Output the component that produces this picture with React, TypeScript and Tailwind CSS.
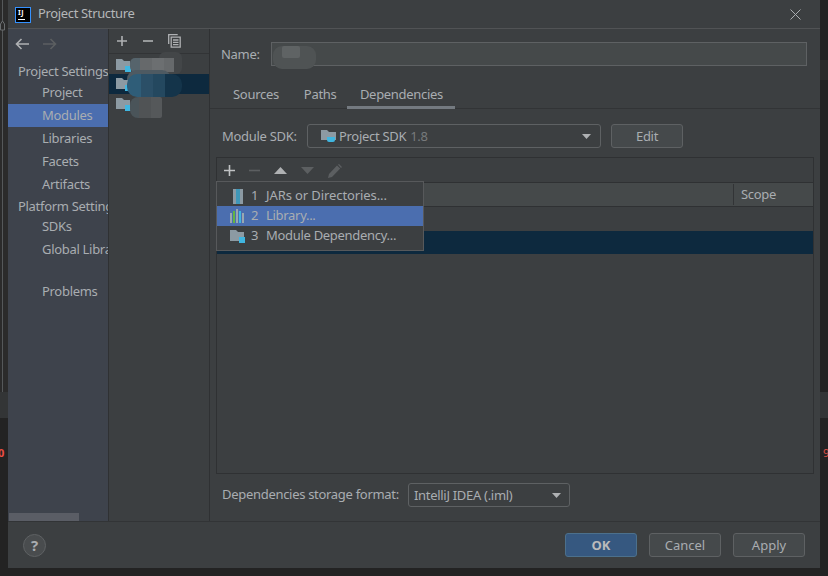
import React from 'react';

const font = { fontFamily: '"Noto Sans", "Liberation Sans", sans-serif' };

const Folder = ({ badge = true }: { badge?: boolean }) => (
  <svg width="16" height="14" viewBox="0 0 16 14">
    <path d="M0 1h6l2 2h6v9H0z" fill="#8c9aa3" />
    {badge && <rect x="9" y="8" width="6" height="6" fill="#40b6e0" />}
  </svg>
);

const Caret = () => (
  <svg width="9" height="5" viewBox="0 0 9 5">
    <path d="M0 0h9L4.5 5z" fill="#afb1b3" />
  </svg>
);

const navItems = [
  { label: 'Project' },
  { label: 'Modules', active: true },
  { label: 'Libraries' },
  { label: 'Facets' },
  { label: 'Artifacts' },
];

function Sidebar() {
  return (
    <div className="relative flex w-[101px] shrink-0 flex-col overflow-hidden whitespace-nowrap border-r border-[#2f3133] bg-[#3e434c] text-[13px] tracking-[-0.3px] text-[#a9adb1]">
      <div className="flex h-[28px] items-center gap-[14px] pl-[7px] pt-[2px]">
        <svg width="14" height="12" viewBox="0 0 14 12" fill="none" stroke="#afb1b3" strokeWidth="1.6">
          <path d="M14 6H1.5M6.5 1 1.5 6l5 5" />
        </svg>
        <svg width="14" height="12" viewBox="0 0 14 12" fill="none" stroke="#5c5f61" strokeWidth="1.6">
          <path d="M0 6h12.5M7.5 1l5 5-5 5" />
        </svg>
      </div>
      <div className="flex h-[24px] items-center pl-[10px] pt-[6px]">Project Settings</div>
      {navItems.map((n) => (
        <div
          key={n.label}
          className={`flex h-[23px] shrink-0 items-center pl-[34px] ${n.active ? 'bg-[#4b6eaf]' : ''}`}
        >
          {n.label}
        </div>
      ))}
      <div className="flex h-[20px] items-center pl-[10px] pt-[1px]">Platform Settings</div>
      <div className="flex h-[22px] items-center pl-[34px]">SDKs</div>
      <div className="flex h-[23px] items-center pl-[34px]">Global Libraries</div>
      <div className="h-[19px]" />
      <div className="flex h-[23px] items-center pl-[34px]">Problems</div>
      <div className="absolute bottom-0 left-[1px] h-[8px] w-[70px] bg-[#5a5d65]" />
    </div>
  );
}

function ModuleList() {
  return (
    <div className="relative flex w-[101px] shrink-0 flex-col border-r border-[#2f3133]">
      <div className="flex h-[25px] items-center gap-[14px] border-b border-[#323436] pl-[7px]">
        <svg width="12" height="12" viewBox="0 0 12 12" stroke="#afb1b3" strokeWidth="1.6">
          <path d="M6 1v10M1 6h10" />
        </svg>
        <svg width="12" height="12" viewBox="0 0 12 12" stroke="#afb1b3" strokeWidth="1.6">
          <path d="M1 6h10" />
        </svg>
        <svg width="13" height="14" viewBox="0 0 13 14" fill="none" stroke="#afb1b3" strokeWidth="1.3">
          <path d="M.7 10V.7h9" />
          <path d="M3.2 3.2h9v10h-9zM5 6h5.5M5 8.3h5.5M5 10.6h5.5" />
        </svg>
      </div>
      <div className="flex h-[20px] items-center pl-[7px] pt-[2px]">
        <Folder />
      </div>
      <div className="flex h-[20px] items-center bg-[#0d293e] pl-[7px]">
        <Folder />
      </div>
      <div className="flex h-[20px] items-center pl-[7px]">
        <Folder />
      </div>
      {/* blurred-out module names */}
      <div className="absolute left-[50px] top-[23px] h-[22px] w-[23px] rounded-[6px] bg-[#434648]" />
      <div className="absolute left-[21px] top-[29px] flex h-[14px] w-[44px] overflow-hidden rounded-l-[5px]">
        <div className="w-[10px] bg-[#56646c]" />
        <div className="w-[12px] bg-[#66696b]" />
        <div className="w-[12px] bg-[#6c6f71]" />
        <div className="w-[10px] bg-[#66696b]" />
      </div>
      <div className="absolute left-[18px] top-[41px] h-[10px] w-[44px] rounded-t-[9px] bg-[#4e5a62]" />
      <div className="absolute left-[18px] top-[45px] flex h-[23px] w-[55px] overflow-hidden rounded-[10px]">
        <div className="w-[14px] bg-[#2f5d78]" />
        <div className="w-[12px] bg-[#2b4f67]" />
        <div className="w-[12px] bg-[#24485f]" />
        <div className="w-[17px] bg-[#14344a]" />
      </div>
      <div className="absolute left-[21px] top-[68px] flex h-[21px] w-[32px] overflow-hidden rounded-l-[8px] rounded-r-[2px]">
        <div className="w-[9px] bg-[#4a5459]" />
        <div className="w-[12px] bg-[#505355]" />
        <div className="w-[11px] bg-[#55585a]" />
      </div>
    </div>
  );
}

function Tabs() {
  return (
    <div className="flex h-[31px] items-start border-b border-[#323436] pl-[10px] text-[13px] text-[#a9adb1]">
      <div className="flex h-[31px] items-center px-[13px] pt-[2px]">Sources</div>
      <div className="flex h-[31px] items-center pl-[12px] pr-[11px] pt-[2px]">Paths</div>
      <div className="flex h-[31px] w-[108px] items-center justify-center border-b-[3px] border-[#747a80] pt-[5px]">
        Dependencies
      </div>
    </div>
  );
}

function DepMenu() {
  return (
    <div className="absolute left-[-1px] top-[23px] z-10 w-[208px] border border-[#57595b] bg-[#3c3f41] py-[4px] text-[13px] text-[#a9adb1]">
      <div className="flex h-[20px] items-center pl-[13px]">
        <svg width="14" height="15" viewBox="0 0 14 15" className="mr-[7px]">
          <rect x="3" width="3" height="15" fill="#8c9aa3" />
          <rect x="6" width="4" height="15" fill="#40b6e0" opacity="0.75" />
          <rect x="10" width="3" height="15" fill="#8c9aa3" />
        </svg>
        <span className="w-[15px]">1</span>
        <span className="tracking-[-0.1px]">JARs or Directories...</span>
      </div>
      <div className="flex h-[20px] items-center bg-[#4b6eaf] pl-[13px]">
        <svg width="14" height="14" viewBox="0 0 14 14" className="mr-[7px]">
          <rect x="0" y="4" width="2" height="10" fill="#9aa7b0" />
          <rect x="3" y="2" width="2" height="12" fill="#62b543" />
          <rect x="6" y="0" width="2" height="14" fill="#9aa7b0" />
          <rect x="9" y="2" width="2" height="12" fill="#40b6e0" />
          <rect x="12" y="4" width="2" height="10" fill="#9aa7b0" />
        </svg>
        <span className="w-[15px]">2</span>Library...
      </div>
      <div className="flex h-[20px] items-center pl-[13px]">
        <span className="mr-[5px] flex">
          <Folder />
        </span>
        <span className="w-[15px]">3</span>Module Dependency...
      </div>
    </div>
  );
}

function DepTable() {
  return (
    <div className="relative ml-[6px] mt-[9px] flex h-[317px] w-[598px] flex-col border border-[#2f3133]">
      <div className="flex h-[24px] items-center gap-[14px] pl-[7px] pt-[1px]">
        <svg width="11" height="11" viewBox="0 0 11 11" stroke="#c0c2c4" strokeWidth="1.6">
          <path d="M5.5 0v11M0 5.5h11" />
        </svg>
        <svg width="11" height="11" viewBox="0 0 11 11" stroke="#5c5f61" strokeWidth="1.6">
          <path d="M0 5.5h11" />
        </svg>
        <svg width="13" height="7" viewBox="0 0 13 7">
          <path d="M0 7h13L6.5 0z" fill="#afb1b3" />
        </svg>
        <svg width="13" height="7" viewBox="0 0 13 7">
          <path d="M0 0h13L6.5 7z" fill="#5c5f61" />
        </svg>
        <svg width="14" height="14" viewBox="0 0 14 14">
          <path d="M0 14l1-4 8-8.5 3.2 3L4 13z M10 .7l1-.7 3 3-1 1z" fill="#5c5f61" />
        </svg>
      </div>
      <div className="flex h-[25px] items-stretch border-y border-[#2f3133] bg-[#45494a] text-[13px] text-[#a9adb1]">
        <div className="flex-1" />
        <div className="my-[1px] flex w-[80px] items-center border-l border-[#323436] pl-[7px] pt-[1px]">Scope</div>
      </div>
      <div className="h-[24px]" />
      <div className="h-[23px] bg-[#0d293e]" />
      <DepMenu />
    </div>
  );
}

function RightPane() {
  return (
    <div className="flex min-w-0 flex-1 flex-col text-[13px] tracking-[-0.3px] text-[#a9adb1]">
      <div className="flex items-center pl-[11px] pt-[13px]">
        <span className="w-[50px] pt-[2px]">Name:</span>
        <div className="relative h-[24px] w-[536px] border border-[#5e6163] bg-[#45494a]">
          <div className="absolute left-[1px] top-[3px] h-[23px] w-[43px] rounded-[9px] bg-[#4f5354]" />
          <div className="absolute left-[10px] top-[3px] h-[12px] w-[18px] rounded-[2px] bg-[#5f6364]" />
        </div>
      </div>
      <div className="h-[12px]" />
      <Tabs />
      <div className="flex items-center pl-[12px] pt-[15px]">
        <span className="w-[85px] pt-[2px]">Module SDK:</span>
        <div className="flex h-[24px] w-[294px] items-center rounded-[3px] border border-[#5e6163] pl-[13px] pr-[9px]">
          <svg width="16" height="14" viewBox="0 0 16 14" className="mr-[2px]">
            <path d="M0 1h6l2 2h7v8H0z" fill="#8c9aa3" />
            <path d="M6 8h8v3a2 2 0 0 1-2 2H8a2 2 0 0 1-2-2z" fill="#40b6e0" />
          </svg>
          <span className="pt-[1px]">Project SDK</span>
          <span className="ml-[4px] pt-[1px] text-[#777a7c]">1.8</span>
          <span className="ml-auto flex">
            <Caret />
          </span>
        </div>
        <div className="ml-[10px] flex h-[24px] w-[72px] items-center justify-center rounded-[3px] border border-[#5e6163] bg-[#45494b] pt-[2px]">
          Edit
        </div>
      </div>
      <DepTable />
      <div className="flex items-center pl-[12px] pt-[9px]">
        <span className="w-[186px] whitespace-nowrap pb-[1px]">Dependencies storage format:</span>
        <div className="flex h-[24px] w-[162px] items-center rounded-[3px] border border-[#5e6163] pl-[5px] pr-[8px]">
          <span className="pt-[1px]">IntelliJ IDEA (.iml)</span>
          <span className="ml-auto flex">
            <Caret />
          </span>
        </div>
      </div>
    </div>
  );
}

function Footer() {
  return (
    <div className="flex h-[47px] shrink-0 items-center border-t border-[#323436] px-[15px] text-[13px] text-[#a9adb1]">
      <div className="flex h-[23px] w-[23px] items-center justify-center rounded-full border border-[#5e6163] bg-[#494c4e] text-[15px] font-bold text-[#a9adb1]">
        ?
      </div>
      <div className="ml-auto flex h-[24px] w-[72px] items-center justify-center rounded-[3px] border border-[#4c708c] bg-[#365880] pt-[1px] font-bold text-[#bbbbbb]">
        OK
      </div>
      <div className="ml-[12px] flex h-[24px] w-[72px] items-center justify-center rounded-[3px] border border-[#5e6163] bg-[#45494b] pt-[1px]">
        Cancel
      </div>
      <div className="ml-[12px] flex h-[24px] w-[72px] items-center justify-center rounded-[3px] border border-[#5e6163] bg-[#45494b] pt-[1px]">
        Apply
      </div>
    </div>
  );
}

export default function App() {
  return (
    <div className="flex h-[576px] w-[828px] overflow-hidden bg-[#232323]" style={font}>
      {/* IDE behind the dialog */}
      <div className="flex w-[8px] shrink-0 flex-col overflow-hidden">
        <div className="h-[392px] bg-[#2b2b2b]">
          <svg width="8" height="392" viewBox="0 0 8 392">
            <path d="M2.5 0v392" stroke="#55585a" />
            <path d="M.5 30v-6l2-3 2 3v6z" fill="#2b2b2b" stroke="#6a6d6f" />
          </svg>
        </div>
        <div className="h-[26px] bg-[#333536]" />
        <div className="-ml-[2px] mt-[27px] text-[11px] font-bold leading-[16px] text-[#ee4f44]">0</div>
      </div>
      <div className="flex h-[568px] w-[812px] shrink-0 flex-col bg-[#3c3f41]">
        <div className="flex h-[29px] shrink-0 items-center border-b border-[#515355] pl-[7px] pr-[19px] text-[13px] tracking-[-0.35px] text-[#b5b7b9]">
          <div className="mr-[7px] mt-[1px] flex h-[16px] w-[16px] flex-col border border-[#3592ff] bg-black px-[2px] pt-[1px] text-[7px] font-bold leading-[8px] tracking-[0.6px] text-white">
            <span>IJ</span>
            <span className="mt-[2px] h-[1px] w-[7px] bg-white" />
          </div>
          Project Structure
          <svg width="11" height="11" viewBox="0 0 11 11" stroke="#a9adb1" className="ml-auto">
            <path d="M.5.5l10 10M10.5.5l-10 10" />
          </svg>
        </div>
        <div className="flex min-h-0 flex-1">
          <Sidebar />
          <ModuleList />
          <RightPane />
        </div>
        <Footer />
      </div>
      <div className="flex w-[8px] shrink-0 flex-col overflow-hidden">
        <div className="h-[60px] bg-[#232323]" />
        <div className="h-[20px] bg-[#2b2b2b]" />
        <div className="h-[312px] bg-[#232323]" />
        <div className="h-[26px] bg-[#333536]" />
        <div className="ml-[3px] mt-[27px] text-[11px] leading-[16px] text-[#e0524a]">9</div>
      </div>
    </div>
  );
}
